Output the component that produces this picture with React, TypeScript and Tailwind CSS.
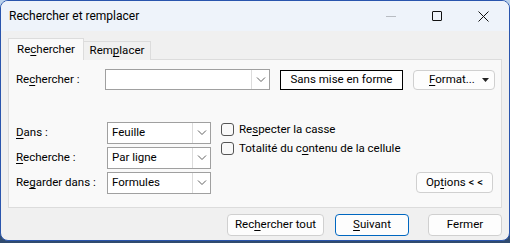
import React from 'react';

const U = ({ children }: { children: React.ReactNode }) => <span className="underline underline-offset-2">{children}</span>;

const Chevron = () => (
  <svg width="10" height="6" viewBox="0 0 10 6" fill="none" stroke="#606060" strokeWidth="1">
    <path d="M1 0.5 L5 4.5 L9 0.5" />
  </svg>
);

const Select = ({ value }: { value: string }) => (
  <div className="flex w-[104px] h-[22px] border border-[#a0a0a0] bg-white">
    <div className="flex-1 flex items-center pl-[4px]">{value}</div>
    <div className="w-[18px] border-l border-[#dcdcdc] flex items-center justify-center"><Chevron /></div>
  </div>
);

const Check = ({ children }: { children: React.ReactNode }) => (
  <div className="flex items-center gap-[5px] h-[19px]">
    <div className="w-[13px] h-[13px] border border-[#555] rounded-[3px] bg-[#f9f9f9]" />
    <span>{children}</span>
  </div>
);

export default function App() {
  return (
    <div className="w-[510px] h-[243px] bg-gradient-to-b from-[#bcd3ec] to-[#2f4a6e] overflow-hidden" style={{ fontFamily: 'Roboto, "Noto Sans", sans-serif' }}>
      <div className="w-[510px] h-[241px] border border-[#2a55ad] rounded-[8px] overflow-hidden bg-[#f0f0f0] text-[11.5px] text-black flex flex-col">
        {/* title bar */}
        <div className="h-[30px] bg-[#eef3fa] flex items-center shrink-0">
          <div className="pl-[8px] flex-1 text-[12px]">Rechercher et remplacer</div>
          <div className="flex items-center">
            <div className="w-[46px] flex justify-center"><div className="w-[10px] h-px bg-[#b8bcc2]" /></div>
            <div className="w-[46px] flex justify-center"><div className="w-[10px] h-[10px] border border-[#111] rounded-[1px]" /></div>
            <div className="w-[46px] flex justify-center mr-[3px]">
              <svg width="11" height="11" viewBox="0 0 11 11" stroke="#111" strokeWidth="1"><path d="M0.5 0.5 L10.5 10.5 M10.5 0.5 L0.5 10.5" /></svg>
            </div>
          </div>
        </div>

        {/* tabs */}
        <div className="px-[7px] pt-[7px] flex flex-col">
          <div className="flex items-end h-[22px] relative z-10">
            <div className="w-[76px] h-[22px] bg-[#f9f9f9] border border-b-0 border-[#dcdcdc] flex items-center justify-center">Re<U>c</U>hercher</div>
            <div className="w-[67px] h-[19px] bg-[#f0f0f0] border border-l-0 border-b-0 border-[#dcdcdc] flex items-center justify-center">Rem<U>p</U>lacer</div>
          </div>
          <div className="w-[494px] h-[149px] -mt-px bg-[#f9f9f9] border border-[#dcdcdc] pl-[7px] pt-[9px]">
            <div className="flex items-center h-[21px]">
              <div className="w-[89px]">Re<U>c</U>hercher :</div>
              <div className="flex w-[165px] h-[21px] border border-[#a0a0a0] bg-white">
                <div className="flex-1" />
                <div className="w-[18px] border-l border-[#dcdcdc] flex items-center justify-center"><Chevron /></div>
              </div>
              <div className="ml-[10px] w-[123px] h-[20px] border border-black bg-white flex items-center justify-center">Sans mise en forme</div>
              <div className="ml-[10px] w-[82px] h-[20px] border border-[#d0d0d0] rounded-[4px] bg-[#fdfdfd] flex items-center pl-[15px]">
                <span className="flex-1"><U>F</U>ormat...</span>
                <svg width="7" height="4" viewBox="0 0 7 4" className="mr-[5px]"><path d="M0 0 H7 L3.5 4 Z" fill="#222" /></svg>
              </div>
            </div>

            <div className="flex mt-[32px]">
              <div className="flex flex-col gap-[3px]">
                <div className="flex items-center"><div className="w-[91px]"><U>D</U>ans :</div><Select value="Feuille" /></div>
                <div className="flex items-center"><div className="w-[91px]"><U>R</U>echerche :</div><Select value="Par ligne" /></div>
                <div className="flex items-center"><div className="w-[91px]">Re<U>g</U>arder dans :</div><Select value="Formules" /></div>
              </div>
              <div className="flex-1 flex flex-col ml-[10px] -mt-[2px]">
                <Check>Re<U>s</U>pecter la casse</Check>
                <Check>Totalité du c<U>o</U>ntenu de la cellule</Check>
                <div className="flex justify-end mt-[14px] mr-[8px]">
                  <div className="w-[77px] h-[21px] border border-[#d0d0d0] rounded-[4px] bg-[#fdfdfd] flex items-center justify-center">Op<U>t</U>ions &lt; &lt;</div>
                </div>
              </div>
            </div>
          </div>
        </div>

        {/* footer */}
        <div className="flex justify-end items-center pr-[7px] mt-[6px]">
          <div className="w-[97px] h-[22px] border border-[#d0d0d0] rounded-[4px] bg-[#fdfdfd] flex items-center justify-center">Rec<U>h</U>ercher tout</div>
          <div className="ml-[11px] w-[74px] h-[22px] border border-[#0067c0] rounded-[4px] bg-[#fdfdfd] flex items-center justify-center"><U>S</U>uivant</div>
          <div className="ml-[19px] w-[74px] h-[22px] border border-[#d0d0d0] rounded-[4px] bg-[#fdfdfd] flex items-center justify-center">Fermer</div>
        </div>
      </div>
    </div>
  );
}
